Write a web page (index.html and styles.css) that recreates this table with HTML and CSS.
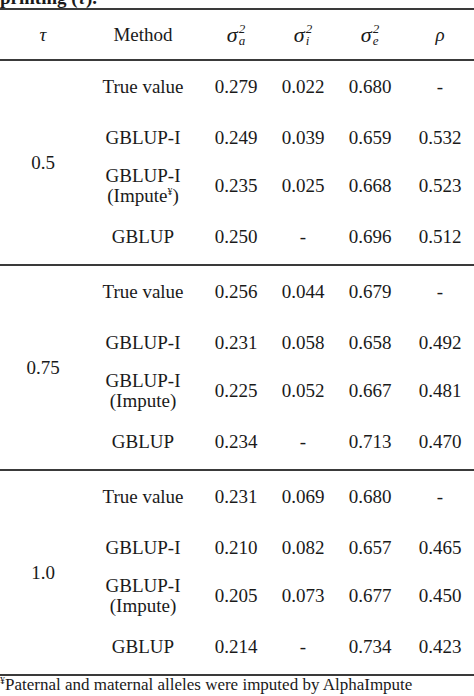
FILE: index.html
```html
<!DOCTYPE html>
<html>
<head>
<meta charset="utf-8">
<link rel="stylesheet" href="styles.css">
</head>
<body>
<div class="caption"><span class="caption-text">printing (<i>τ</i>).</span></div>
<table class="results">
  <colgroup>
    <col class="c-tau"><col class="c-method"><col class="c-a"><col class="c-i"><col class="c-e"><col class="c-rho">
  </colgroup>
  <thead>
    <tr class="head">
      <th><i class="math">τ</i></th>
      <th>Method</th>
      <th><span class="var"><i class="math">σ</i><span class="scripts"><span class="sup">2</span><span class="sub">a</span></span></span></th>
      <th><span class="var"><i class="math">σ</i><span class="scripts"><span class="sup">2</span><span class="sub">i</span></span></span></th>
      <th><span class="var"><i class="math">σ</i><span class="scripts"><span class="sup">2</span><span class="sub">e</span></span></span></th>
      <th><i class="math">ρ</i></th>
    </tr>
  </thead>
  <tbody>
    <tr class="r1"><td rowspan="4" class="tau">0.5</td><td>True value</td><td>0.279</td><td>0.022</td><td>0.680</td><td>-</td></tr>
    <tr class="r2"><td>GBLUP-I</td><td>0.249</td><td>0.039</td><td>0.659</td><td>0.532</td></tr>
    <tr class="r3"><td class="two">GBLUP-I<br>(Impute<sup class="yen">¥</sup>)</td><td>0.235</td><td>0.025</td><td>0.668</td><td>0.523</td></tr>
    <tr class="r4"><td>GBLUP</td><td>0.250</td><td>-</td><td>0.696</td><td>0.512</td></tr>
  </tbody>
  <tbody>
    <tr class="r1"><td rowspan="4" class="tau">0.75</td><td>True value</td><td>0.256</td><td>0.044</td><td>0.679</td><td>-</td></tr>
    <tr class="r2"><td>GBLUP-I</td><td>0.231</td><td>0.058</td><td>0.658</td><td>0.492</td></tr>
    <tr class="r3"><td class="two">GBLUP-I<br>(Impute)</td><td>0.225</td><td>0.052</td><td>0.667</td><td>0.481</td></tr>
    <tr class="r4"><td>GBLUP</td><td>0.234</td><td>-</td><td>0.713</td><td>0.470</td></tr>
  </tbody>
  <tbody>
    <tr class="r1"><td rowspan="4" class="tau">1.0</td><td>True value</td><td>0.231</td><td>0.069</td><td>0.680</td><td>-</td></tr>
    <tr class="r2"><td>GBLUP-I</td><td>0.210</td><td>0.082</td><td>0.657</td><td>0.465</td></tr>
    <tr class="r3"><td class="two">GBLUP-I<br>(Impute)</td><td>0.205</td><td>0.073</td><td>0.677</td><td>0.450</td></tr>
    <tr class="r4"><td>GBLUP</td><td>0.214</td><td>-</td><td>0.734</td><td>0.423</td></tr>
  </tbody>
</table>
<p class="footnote"><sup class="yen-note">¥</sup>Paternal and maternal alleles were imputed by AlphaImpute</p>
</body>
</html>
```
FILE: styles.css
```css
html, body {
  margin: 0;
  padding: 0;
  background: #ffffff;
}
body {
  width: 474px;
  height: 696px;
  overflow: hidden;
  font-family: "Liberation Serif", "Times New Roman", serif;
  color: #1a1a1a;
}
.caption {
  height: 7px;
  display: flex;
  align-items: flex-end;
}
.caption-text {
  font-weight: bold;
  font-size: 19px;
  line-height: 19px;
}
.results {
  width: 474px;
  table-layout: fixed;
  border-collapse: collapse;
  font-size: 19px;
  margin-top: 1px;
}
.c-tau { width: 86px; }
.c-method { width: 114px; }
.c-a { width: 72px; }
.c-i { width: 62px; }
.c-e { width: 72px; }
.c-rho { width: 68px; }
.results th,
.results td {
  padding: 0;
  text-align: center;
  vertical-align: middle;
  font-weight: normal;
  line-height: 20px;
}
.results thead tr {
  border-top: 2px solid #3a3a3a;
  border-bottom: 2px solid #3a3a3a;
}
.results tbody {
  border-bottom: 2px solid #3a3a3a;
}
.head { height: 51px; }
.r1 { height: 53px; }
.r2 { height: 49px; }
.r3 { height: 48px; }
.r4 { height: 55px; }
.math {
  font-family: "Liberation Serif", serif;
  font-style: italic;
}
.var {
  display: inline-flex;
  align-items: center;
}
.var .math {
  font-size: 22px;
  line-height: 20px;
}
.scripts {
  display: inline-flex;
  flex-direction: column;
  font-style: italic;
  font-size: 13px;
  line-height: 12px;
  margin-left: 1px;
  text-align: left;
}
.yen {
  font-size: 10px;
  vertical-align: 7px;
  line-height: 0;
}
.footnote {
  margin: 0;
  font-size: 17px;
  line-height: 17px;
}
.yen-note {
  font-size: 10px;
  vertical-align: 6px;
  line-height: 0;
}
```
